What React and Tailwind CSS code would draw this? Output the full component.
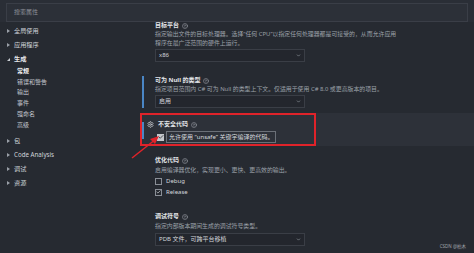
import { Settings, CircleHelp, Check, ChevronDown } from 'lucide-react'

const font = { fontFamily: '"Noto Sans", "Noto Sans CJK SC", sans-serif' }

const sideTop = [
  { label: '全局使用' },
  { label: '应用程序' },
]
const sideChildren = ['常规', '错误和警告', '输出', '事件', '强命名', '高级']
const sideBottom = ['包', 'Code Analysis', '调试', '资源']

function Caret() {
  return <span className="w-0 h-0 border-y-[2.5px] border-y-transparent border-l-[3.5px] border-l-[#9aa0a8] mr-[4px]" />
}

function SideItem({ label }) {
  return (
    <div className="h-[14px] flex items-center pl-[7px] text-[6.2px] text-[#cfd3d9]">
      <Caret />
      <span>{label}</span>
    </div>
  )
}

function Heading({ children, icon }) {
  return (
    <div className="h-[9px] flex items-center gap-[2px] text-[6px] font-bold text-[#e4e6ea]">
      {icon}
      <span>{children}</span>
      <CircleHelp size={6} strokeWidth={2} className="text-[#a8adb5] ml-[1px]" />
    </div>
  )
}

function Desc({ children }) {
  return <div className="leading-[9px] text-[5.9px] text-[#9ca1a9]">{children}</div>
}

function Select({ value }) {
  return (
    <div className="w-[150px] h-[13px] border border-[#3a3e46] bg-[#23262d] flex items-center justify-between px-[3px] text-[6px] text-[#d4d7dc]">
      <span>{value}</span>
      <ChevronDown size={5} strokeWidth={3} className="text-[#9aa0a8]" />
    </div>
  )
}

function Box({ checked }) {
  return (
    <div className="w-[7px] h-[7px] border border-[#8a8f97] flex items-center justify-center">
      {checked && <Check size={6} strokeWidth={3} className="text-[#e6e8eb]" />}
    </div>
  )
}

export default function App() {
  return (
    <div className="relative w-[474px] h-[253px] overflow-hidden bg-[#262a31]" style={font}>
      {/* search */}
      <div className="pt-[3px] px-[6px] bg-[#2a2e36]">
        <div className="h-[19px] border border-[#3a3e47] bg-[#2c3038] flex items-center pl-[7px] text-[6px] text-[#8c9199]">
          搜索属性
        </div>
      </div>

      <div className="flex">
        {/* sidebar */}
        <div className="w-[140px] shrink-0 pt-[2px]">
          {sideTop.map((s) => <SideItem key={s.label} label={s.label} />)}
          <div className="h-[14px] flex items-center pl-[7px] text-[6.2px] text-[#e6e8eb] font-bold">
            <span className="w-0 h-0 border-l-[3px] border-l-transparent border-b-[3px] border-b-[#c8ccd2] mr-[4px]" />
            <span>生成</span>
          </div>
          <div className="pl-[17px] text-[6px] text-[#c3c7ce]">
            {sideChildren.map((c, i) => (
              <div key={c} className={`h-[10.8px] flex items-center ${i === 0 ? 'font-bold text-[#f0f1f3]' : ''}`}>{c}</div>
            ))}
          </div>
          <div className="mt-[3px]">
            {sideBottom.map((s) => <SideItem key={s} label={s} />)}
          </div>
        </div>

        {/* content */}
        <div className="flex-1">
          {/* 目标平台 */}
          <div className="pl-[15px] -mt-[1px]">
            <Heading>目标平台</Heading>
            <Desc>指定输出文件的目标处理器。选择“任何 CPU”以指定任何处理器都是可接受的，从而允许应用</Desc>
            <Desc>程序在最广泛范围的硬件上运行。</Desc>
            <div className="mt-[1px]"><Select value="x86" /></div>
          </div>

          {/* 可为 Null */}
          <div className="flex mt-[14px]">
            <div className="w-[15px] shrink-0 pl-[2px]"><div className="w-[2px] h-full bg-[#4a86c5]" /></div>
            <div>
              <Heading>可为 Null 的类型</Heading>
              <Desc>指定项目范围内 C# 可为 Null 的类型上下文。仅适用于使用 C# 8.0 或更高版本的项目。</Desc>
              <div className="mt-[1px]"><Select value="启用" /></div>
            </div>
          </div>

          {/* 不安全代码 */}
          <div className="flex mt-[5px] h-[33px] bg-[#2d3139] pt-[7px]">
            <div className="w-[15px] shrink-0 pl-[2px]"><div className="w-[2px] h-[17px] mt-[2px] bg-[#4a86c5]" /></div>
            <div className="-ml-[8px]">
              <Heading icon={<Settings size={7} strokeWidth={2.5} className="text-[#c9ccd1] mr-[2px]" />}>不安全代码</Heading>
              <div className="mt-[2px] h-[12px] flex items-center ml-[10px]">
                <div className="w-[7px] h-[7px] bg-[#c4c7cc] flex items-center justify-center">
                  <Check size={6} strokeWidth={3} className="text-[#2a2d33]" />
                </div>
                <div className="ml-[2px] h-[12px] border border-[#6b7078] flex items-center px-[2px] text-[6px] text-[#d6d9de]">
                  允许使用 “unsafe” 关键字编译的代码。
                </div>
              </div>
            </div>
          </div>

          {/* 优化代码 */}
          <div className="pl-[15px] mt-[10px]">
            <Heading>优化代码</Heading>
            <div className="mt-[1px]"><Desc>启用编译器优化，实现更小、更快、更高效的输出。</Desc></div>
            <div className="mt-[1px] h-[10px] flex items-center gap-[4px] text-[6px] text-[#d4d7dc]">
              <Box /><span>Debug</span>
            </div>
            <div className="mt-[1px] h-[10px] flex items-center gap-[4px] text-[6px] text-[#d4d7dc]">
              <Box checked /><span>Release</span>
            </div>
          </div>

          {/* 调试符号 */}
          <div className="pl-[15px] mt-[15px]">
            <Heading>调试符号</Heading>
            <div className="mt-[1px]"><Desc>指定内部版本期间生成的调试符号类型。</Desc></div>
            <div className="mt-[2px]"><Select value="PDB 文件，可跨平台移植" /></div>
          </div>
        </div>
      </div>

      {/* annotation: red box */}
      <div className="absolute left-[140px] top-[113px] w-[176px] h-[33px] border-2 border-[#e0232a]" />
      {/* annotation: arrow */}
      <svg className="absolute left-[125px] top-[132px]" width="40" height="30" viewBox="0 0 40 30">
        <line x1="7" y1="26" x2="31" y2="7" stroke="#e0232a" strokeWidth="1.5" />
        <polygon points="34,4 25,7 30,12" fill="#e0232a" />
      </svg>

      {/* watermark */}
      <div className="absolute right-[8px] bottom-[3px] text-[4.5px] text-[#a0a4aa]">CSDN @柏木</div>
    </div>
  )
}
